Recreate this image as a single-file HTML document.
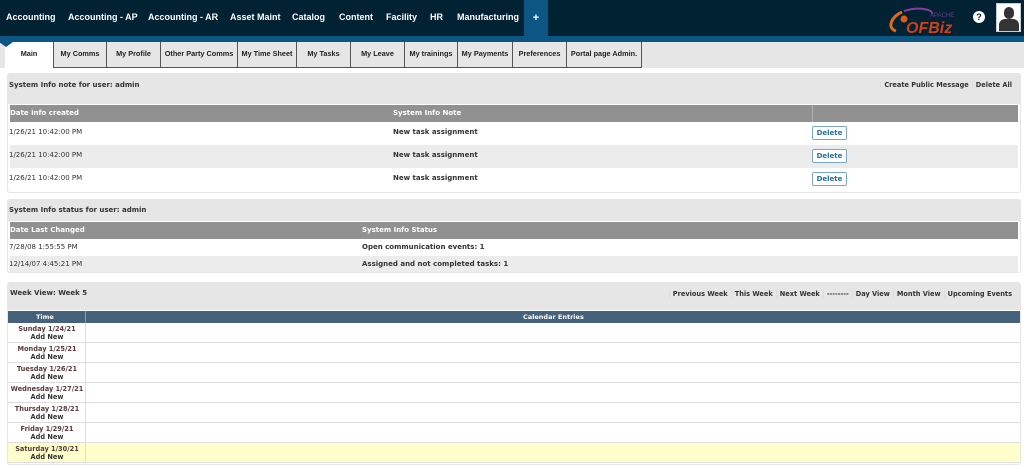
<!DOCTYPE html>
<html><head><meta charset="utf-8"><style>
*{margin:0;padding:0;box-sizing:border-box}
body{width:1024px;height:467px;overflow:hidden;background:#fff;font-family:"DejaVu Sans",Verdana,sans-serif;position:relative}
.a{position:absolute}
#top{left:0;top:0;width:1024px;height:37px;background:#012233}
#strip{left:0;top:36px;width:1024px;height:6px;background:#0b5682}
.nv{position:absolute;top:12px;color:#fff;font:bold 9px "Liberation Sans",Arial,sans-serif;white-space:nowrap}
#plus{left:524px;top:0;width:24px;height:37px;background:#0b5682;color:#fff;font:bold 11px "Liberation Sans";text-align:center;line-height:36px}
#tabs{left:0;top:42px;width:1024px;height:26px;background:#e6e6e6}
.tb{position:absolute;top:42px;height:26px;border:1px solid #555;border-top:none;background:#e6e6e6;font:bold 7.3px "Liberation Sans",Arial,sans-serif;color:#222;text-align:center;line-height:24px;white-space:nowrap;overflow:hidden}
.pn{position:absolute;left:7px;width:1014px;background:#fff;border:1px solid #e6e6e6;border-radius:3px}
.hd{position:absolute;left:0;width:100%;background:#e6e6e6}
.t{position:absolute;font:bold 7px "DejaVu Sans",Verdana,sans-serif;white-space:nowrap;color:#333}
.th{position:absolute;left:2px;width:1008px;background:#919191}
.w{color:#fff}
.row{position:absolute;left:2px;width:1008px}
.btn{position:absolute;width:35px;height:14px;border:1px solid #7aa7c7;border-radius:2px;background:#fff;color:#2a6e9a;font:bold 7px "DejaVu Sans";text-align:center;line-height:12px}
.lk{position:absolute;right:5px;display:flex;gap:0;font:bold 6.6px "DejaVu Sans";color:#333;white-space:nowrap}
.lk span{padding:0 3px;border-left:1px solid #ddd}
.cr{position:absolute;left:0;width:1012px;height:20px;border-bottom:1px solid #ddd}
.cr .d{position:absolute;left:0;width:78px;top:2px;text-align:center;font:bold 6.6px "DejaVu Sans";color:#5a3a3a;line-height:8px}
.cr .d b{color:#333}
.cr .s{position:absolute;left:77px;top:0;width:1px;height:20px;background:#ddd}
</style></head><body>
<div id="top" class="a"></div>
<div id="strip" class="a"></div>
<span class="nv" style="left:6px">Accounting</span>
<span class="nv" style="left:68px">Accounting - AP</span>
<span class="nv" style="left:148px">Accounting - AR</span>
<span class="nv" style="left:230px">Asset Maint</span>
<span class="nv" style="left:292px">Catalog</span>
<span class="nv" style="left:339px">Content</span>
<span class="nv" style="left:386px">Facility</span>
<span class="nv" style="left:430px">HR</span>
<span class="nv" style="left:457px">Manufacturing</span>
<div id="plus" class="a">+</div>
<svg class="a" style="left:884px;top:6px" width="80" height="30">
<path d="M18 6 C8 10 2 22 12 25" stroke="#e06a1a" stroke-width="3" fill="none"/>
<path d="M20 5 C35 0 50 4 48 8" stroke="#8a3a9a" stroke-width="2" fill="none"/>
<circle cx="20" cy="13" r="3.5" fill="#e05a1a"/>
<text x="46" y="11" font-family="Liberation Sans" font-size="6" fill="#6a3a8a">APACHE</text>
<text x="22" y="27" font-family="Liberation Sans" font-weight="bold" font-style="italic" font-size="16" fill="#d0401a">OFBiz</text>
</svg>
<div class="a" style="left:973px;top:11px;width:12px;height:12px;border-radius:50%;background:#fff;color:#012233;font:bold 9px 'Liberation Sans';text-align:center;line-height:12px">?</div>
<div class="a" style="left:996px;top:3px;width:25px;height:29px;background:#fff;border:1px solid #ccc;overflow:hidden">
<div class="a" style="left:7px;top:3px;width:10px;height:12px;border-radius:5px;background:#333"></div>
<div class="a" style="left:2px;top:15px;width:20px;height:14px;border-radius:6px 6px 0 0;background:#333"></div>
</div>
<div id="tabs" class="a"></div>
<div class="tb" style="left:5px;width:48px;background:#fff;border:none">Main</div>
<div class="a" style="top:42px;width:0;height:0;border-left:7px solid transparent;border-right:7px solid transparent;border-top:5px solid #0b5682;left:-1px"></div>
<div class="tb" style="left:53px;width:54px">My Comms</div>
<div class="tb" style="left:106px;width:55px">My Profile</div>
<div class="tb" style="left:160px;width:78px">Other Party Comms</div>
<div class="tb" style="left:237px;width:60px">My Time Sheet</div>
<div class="tb" style="left:296px;width:55px">My Tasks</div>
<div class="tb" style="left:350px;width:55px">My Leave</div>
<div class="tb" style="left:404px;width:54px">My trainings</div>
<div class="tb" style="left:457px;width:56px">My Payments</div>
<div class="tb" style="left:512px;width:55px">Preferences</div>
<div class="tb" style="left:566px;width:76px">Portal page Admin.</div>

<div class="pn" style="top:73px;height:120px">
<div class="hd" style="top:0;height:30px"></div>
<span class="t" style="left:1px;top:7px">System Info note for user: admin</span>
<div class="lk" style="top:7px"><span>Create Public Message</span><span>Delete All</span></div>
<div class="th" style="top:31px;height:17px"></div>
<div class="a" style="left:804px;top:31px;width:1px;height:17px;background:#b0b0b0"></div>
<span class="t w" style="left:2px;top:35px">Date info created</span>
<span class="t w" style="left:385px;top:35px">System Info Note</span>
<div class="row" style="top:71px;height:23px;background:#ececec"></div>
<span class="t" style="left:1px;top:54px;font-weight:normal">1/26/21 10:42:00 PM</span>
<span class="t" style="left:385px;top:54px">New task assignment</span>
<div class="btn" style="left:804px;top:52px">Delete</div>
<span class="t" style="left:1px;top:77px;font-weight:normal">1/26/21 10:42:00 PM</span>
<span class="t" style="left:385px;top:77px">New task assignment</span>
<div class="btn" style="left:804px;top:75px">Delete</div>
<span class="t" style="left:1px;top:100px;font-weight:normal">1/26/21 10:42:00 PM</span>
<span class="t" style="left:385px;top:100px">New task assignment</span>
<div class="btn" style="left:804px;top:98px">Delete</div>
</div>

<div class="pn" style="top:199px;height:74px">
<div class="hd" style="top:0;height:21px"></div>
<span class="t" style="left:1px;top:6px">System Info status for user: admin</span>
<div class="th" style="top:22px;height:17px"></div>
<span class="t w" style="left:2px;top:26px">Date Last Changed</span>
<span class="t w" style="left:354px;top:26px">System Info Status</span>
<span class="t" style="left:1px;top:43px;font-weight:normal">7/28/08 1:55:55 PM</span>
<span class="t" style="left:354px;top:43px">Open communication events: 1</span>
<div class="row" style="top:56px;height:16px;background:#ececec"></div>
<span class="t" style="left:1px;top:60px;font-weight:normal">12/14/07 4:45:21 PM</span>
<span class="t" style="left:354px;top:60px">Assigned and not completed tasks: 1</span>
</div>

<div class="pn" style="top:282px;height:183px">
<div class="hd" style="top:0;height:27px"></div>
<span class="t" style="left:2px;top:6px">Week View: Week 5</span>
<div class="lk" style="top:7px"><span>Previous Week</span><span>This Week</span><span>Next Week</span><span>--------</span><span>Day View</span><span>Month View</span><span>Upcoming Events</span></div>
<div class="a" style="left:0;top:28px;width:1012px;height:12px;background:#46627a"></div>
<div class="a" style="left:77px;top:28px;width:1px;height:12px;background:#8aa0b2"></div>
<span class="t w" style="left:28px;top:30px;font-size:6.5px">Time</span>
<span class="t w" style="left:515px;top:30px;font-size:6.5px">Calendar Entries</span>
<div class="cr" style="top:40px"><div class="s"></div><div class="d">Sunday 1/24/21<br><b>Add New</b></div></div>
<div class="cr" style="top:60px"><div class="s"></div><div class="d">Monday 1/25/21<br><b>Add New</b></div></div>
<div class="cr" style="top:80px"><div class="s"></div><div class="d">Tuesday 1/26/21<br><b>Add New</b></div></div>
<div class="cr" style="top:100px"><div class="s"></div><div class="d">Wednesday 1/27/21<br><b>Add New</b></div></div>
<div class="cr" style="top:120px"><div class="s"></div><div class="d">Thursday 1/28/21<br><b>Add New</b></div></div>
<div class="cr" style="top:140px"><div class="s"></div><div class="d">Friday 1/29/21<br><b>Add New</b></div></div>
<div class="cr" style="top:160px;background:#ffffcc"><div class="s"></div><div class="d">Saturday 1/30/21<br><b>Add New</b></div></div>
</div>
</body></html>
